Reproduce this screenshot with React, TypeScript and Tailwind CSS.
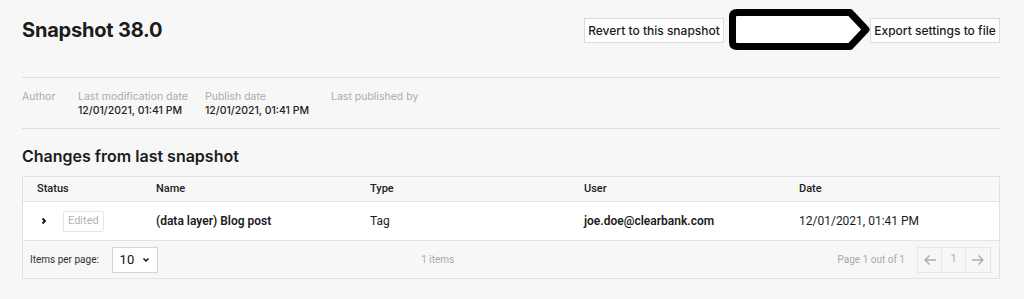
import React from "react";

const metaItems = [
  { label: "Author", value: "", w: "w-[56px]" },
  { label: "Last modification date", value: "12/01/2021, 01:41 PM", w: "w-[127px]" },
  { label: "Publish date", value: "12/01/2021, 01:41 PM", w: "w-[126px]" },
  { label: "Last published by", value: "", w: "w-[120px]" },
];

const cols = "grid grid-cols-[119px_214px_214px_215px_1fr] items-center pl-[14px]";

function Annotation() {
  // black arrow-shaped marker drawn over the hidden button
  return (
    <svg
      className="pointer-events-none absolute left-[-3px] top-[-11px]"
      width="144"
      height="46"
      viewBox="0 0 144 46"
    >
      <path
        d="M10 5.5 H123 L139 22.5 L123 39.5 H10 Q5.5 39.5 5.5 35 V10 Q5.5 5.5 10 5.5 Z"
        fill="#fff"
        stroke="#000"
        strokeWidth="7"
        strokeLinejoin="round"
      />
    </svg>
  );
}

export default function App() {
  return (
    <div className="min-h-[299px] bg-[#f7f7f7] px-[22px] pr-[24px] font-['Inter',sans-serif] text-[#1b1b1b]">
      <div className="flex items-center justify-between pt-[18px]">
        <h1 className="text-[20px] font-bold leading-[25px] tracking-[-0.2px]">Snapshot 38.0</h1>
        <div className="flex items-center">
          <button className="h-[25px] w-[140px] border border-[#dcdcdc] bg-white text-[12px] font-medium">
            Revert to this snapshot
          </button>
          <div className="relative ml-[6px] mr-[6px] h-[25px] w-[134px]">
            <Annotation />
          </div>
          <button className="h-[25px] w-[130px] border border-[#dcdcdc] bg-white text-[12px] font-medium">
            Export settings to file
          </button>
        </div>
      </div>

      <div className="mt-[34px] flex border-y border-[#dedede] pb-[10px] pt-[12px]">
        {metaItems.map((m) => (
          <div key={m.label} className={m.w}>
            <div className="text-[10.5px] leading-[14px] text-[#ababab]">{m.label}</div>
            <div className="text-[10.5px] font-medium leading-[14px] text-[#222]">{m.value || "\u00a0"}</div>
          </div>
        ))}
      </div>

      <h2 className="mt-[17px] text-[16px] font-semibold leading-[20px]">Changes from last snapshot</h2>

      <div className="mt-[10px] border border-[#e1e1e1] font-['Roboto',sans-serif]">
        <div className={`${cols} h-[25px] border-b border-[#e3e3e3] bg-[#f7f7f7] text-[11px] font-medium text-[#222]`}>
          <div>Status</div>
          <div>Name</div>
          <div>Type</div>
          <div>User</div>
          <div>Date</div>
        </div>
        <div className={`${cols} h-[39px] border-b border-[#e3e3e3] bg-white text-[12px]`}>
          <div className="flex items-center">
            <svg width="10" height="10" viewBox="0 0 10 10" className="ml-[2px]">
              <path d="M3.5 2.5 L6 5 L3.5 7.5" fill="none" stroke="#111" strokeWidth="1.8" />
            </svg>
            <span className="ml-[14px] flex h-[21px] items-center rounded-[2px] border border-[#e6e6e6] px-[4px] text-[11px] text-[#b3b3b3]">
              Edited
            </span>
          </div>
          <div className="font-semibold">(data layer) Blog post</div>
          <div>Tag</div>
          <div className="font-semibold">joe.doe@clearbank.com</div>
          <div>12/01/2021, 01:41 PM</div>
        </div>
        <div className="flex h-[37px] items-center bg-[#f7f7f7] pl-[7px] pr-[8px] text-[10px]">
          <span className="text-[#333]">Items per page:</span>
          <div className="ml-[13px] flex h-[26px] w-[46px] items-center justify-center gap-[8px] border border-[#d6d6d6] bg-white text-[13px] text-[#111]">
            <span>10</span>
            <svg width="8" height="6" viewBox="0 0 8 6">
              <path d="M1.5 1.5 L4 4 L6.5 1.5" fill="none" stroke="#111" strokeWidth="1.5" />
            </svg>
          </div>
          <div className="flex-1 pr-[120px] text-center text-[#a9a9a9]">1 items</div>
          <span className="mr-[12px] text-[#a9a9a9]">Page 1 out of 1</span>
          <div className="flex h-[26px] border border-[#e6e6e6] bg-[#f7f7f7] text-[#b0b0b0]">
            <div className="flex w-[24px] items-center justify-center border-r border-[#e6e6e6]">
              <svg width="14" height="12" viewBox="0 0 14 12">
                <path d="M13 6 H2 M6.5 1.5 L2 6 L6.5 10.5" fill="none" stroke="#aaa" strokeWidth="1.3" />
              </svg>
            </div>
            <div className="flex w-[24px] items-center justify-center border-r border-[#e6e6e6] text-[11px]">1</div>
            <div className="flex w-[24px] items-center justify-center">
              <svg width="14" height="12" viewBox="0 0 14 12">
                <path d="M1 6 H12 M7.5 1.5 L12 6 L7.5 10.5" fill="none" stroke="#aaa" strokeWidth="1.3" />
              </svg>
            </div>
          </div>
        </div>
      </div>
    </div>
  );
}
